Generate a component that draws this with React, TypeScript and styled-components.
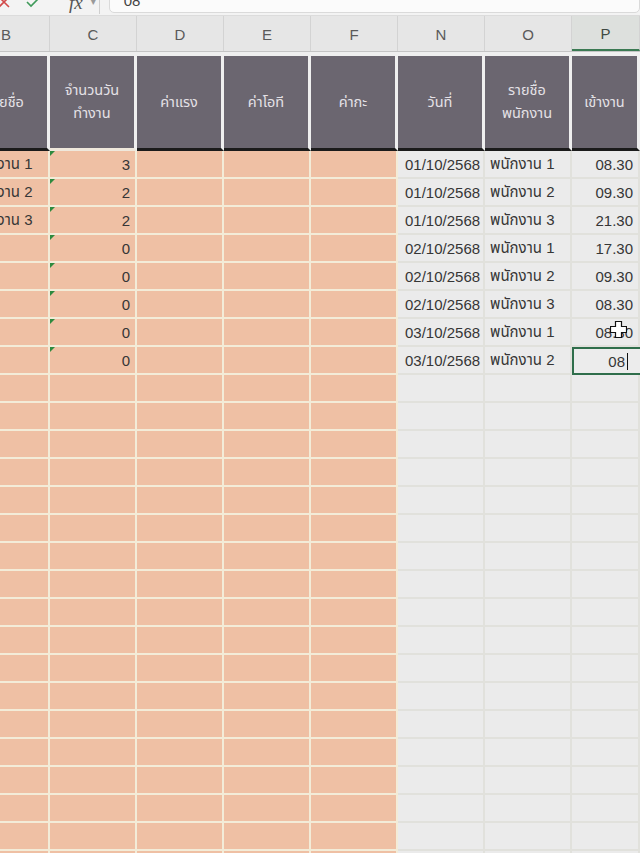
import React from 'react';
import styled, { createGlobalStyle } from 'styled-components';

type Tone = 'pink' | 'gray';
type Align = 'left' | 'right';

const COL_TEMPLATE = '87px 87px 87px 87px 87px 87px 87px 68px';

const LETTERS = ['B', 'C', 'D', 'E', 'F', 'N', 'O', 'P'];

const HEADERS: { label: string[]; noBase?: boolean }[] = [
  { label: ['รายชื่อ'] },
  { label: ['จำนวนวัน', 'ทำงาน'], noBase: true },
  { label: ['ค่าแรง'] },
  { label: ['ค่าโอที'] },
  { label: ['ค่ากะ'] },
  { label: ['วันที่'] },
  { label: ['รายชื่อ', 'พนักงาน'] },
  { label: ['เข้างาน'] },
];

const SUMMARY = [
  { name: 'พนักงาน 1', days: '3' },
  { name: 'พนักงาน 2', days: '2' },
  { name: 'พนักงาน 3', days: '2' },
  { name: '', days: '0' },
  { name: '', days: '0' },
  { name: '', days: '0' },
  { name: '', days: '0' },
  { name: '', days: '0' },
];

const LOG = [
  { date: '01/10/2568', name: 'พนักงาน 1', time: '08.30' },
  { date: '01/10/2568', name: 'พนักงาน 2', time: '09.30' },
  { date: '01/10/2568', name: 'พนักงาน 3', time: '21.30' },
  { date: '02/10/2568', name: 'พนักงาน 1', time: '17.30' },
  { date: '02/10/2568', name: 'พนักงาน 2', time: '09.30' },
  { date: '02/10/2568', name: 'พนักงาน 3', time: '08.30' },
  { date: '03/10/2568', name: 'พนักงาน 1', time: '08.30' },
];

const ROW_COUNT = 26;

const GlobalStyle = createGlobalStyle`
  html, body {
    margin: 0;
    padding: 0;
    background: #ebebeb;
  }
  body {
    font-family: "Liberation Sans", "Noto Sans", "Noto Sans Thai", "DejaVu Sans", sans-serif;
  }
`;

const App = () => {
  const rows = Array.from({ length: ROW_COUNT }, (_, i) => i);

  return (
    <Page>
      <GlobalStyle />
      <FormulaBar>
        <BarIcon>
          <svg width="14" height="14" viewBox="0 0 14 14">
            <path d="M2 2 L12 12 M12 2 L2 12" stroke="#d24a4a" strokeWidth="1.6" fill="none" />
          </svg>
        </BarIcon>
        <BarIcon>
          <svg width="16" height="14" viewBox="0 0 16 14">
            <path d="M2 7 L6 11 L14 3" stroke="#3f9a5a" strokeWidth="1.6" fill="none" />
          </svg>
        </BarIcon>
        <FxLabel>fx</FxLabel>
        <Caret>▾</Caret>
        <BarDivider />
        <FormulaInput>08</FormulaInput>
      </FormulaBar>

      <LetterRow>
        {LETTERS.map(l => (
          <Letter key={l} $active={l === 'P'}>
            {l}
          </Letter>
        ))}
      </LetterRow>

      <Sheet>
        {HEADERS.map((h, i) => (
          <HeaderCell key={i} $noBase={h.noBase}>
            <span>
              {h.label.map((line, j) => (
                <div key={j}>{line}</div>
              ))}
            </span>
          </HeaderCell>
        ))}

        {rows.map(r => {
          const sum = SUMMARY[r];
          const log = LOG[r];
          const editing = r === 7;
          return (
            <React.Fragment key={r}>
              <Cell $tone="pink" $align="left">{sum?.name}</Cell>
              <Cell $tone="pink" $align="right">
                {sum && <Flag />}
                {sum?.days}
              </Cell>
              <Cell $tone="pink" $align="right" />
              <Cell $tone="pink" $align="right" />
              <Cell $tone="pink" $align="right" />
              <Cell $tone="gray" $align="left" $pad={7}>
                {editing ? '03/10/2568' : log?.date}
              </Cell>
              <Cell $tone="gray" $align="left">
                {editing ? 'พนักงาน 2' : log?.name}
              </Cell>
              {editing ? (
                <ActiveCell>
                  08
                  <TextCaret />
                </ActiveCell>
              ) : (
                <Cell $tone="gray" $align="right">
                  {log?.time}
                  {r === 6 && (
                    <MoveCursor width="17" height="17" viewBox="0 0 17 17">
                      <path
                        d="M5.5 0.5 H11.5 V5.5 H16.5 V11.5 H11.5 V16.5 H5.5 V11.5 H0.5 V5.5 H5.5 Z"
                        fill="#ffffff"
                        stroke="#111111"
                        strokeWidth="1.2"
                      />
                    </MoveCursor>
                  )}
                </Cell>
              )}
            </React.Fragment>
          );
        })}
      </Sheet>
    </Page>
  );
};

export default App;

const Page = styled.div`
  width: 640px;
  height: 853px;
  overflow: hidden;
  background: #ebebeb;
`;

const FormulaBar = styled.div`
  display: flex;
  align-items: flex-start;
  height: 16px;
  overflow: hidden;
  background: #f3f3f3;
  border-bottom: 1px solid #dcdcdc;
  box-sizing: border-box;
`;

const BarIcon = styled.div`
  display: flex;
  margin-top: -5px;
  margin-right: 14px;

  &:first-child {
    margin-left: -3px;
  }
`;

const FxLabel = styled.div`
  margin-top: -8px;
  margin-left: 14px;
  font-family: "Liberation Serif", serif;
  font-style: italic;
  font-size: 19px;
  color: #555;
`;

const Caret = styled.div`
  margin-top: -4px;
  margin-left: 8px;
  font-size: 10px;
  color: #9a9a9a;
`;

const BarDivider = styled.div`
  width: 1px;
  height: 14px;
  margin-left: 3px;
  background: #cfcfcf;
`;

const FormulaInput = styled.div`
  flex: 1;
  height: 26px;
  margin-top: -13px;
  margin-left: 9px;
  padding: 0 14px;
  display: flex;
  align-items: center;
  background: #fbfbfb;
  border: 1px solid #dadada;
  border-radius: 5px;
  font-size: 15px;
  color: #444;
  box-sizing: border-box;
`;

const LetterRow = styled.div`
  display: grid;
  grid-template-columns: ${COL_TEMPLATE};
  margin-left: -37px;
  height: 36px;
  background: #e6e6e6;
  border-bottom: 1px solid #c4c4c4;
  box-sizing: border-box;
`;

const Letter = styled.div<{ $active?: boolean }>`
  display: flex;
  align-items: center;
  justify-content: center;
  padding-top: 2px;
  font-size: 15px;
  color: ${p => (p.$active ? '#3f4a43' : '#5a5a5a')};
  background: ${p => (p.$active ? '#dde0dd' : 'transparent')};
  border-right: 1px solid #d3d3d3;
  border-bottom: ${p => (p.$active ? '2px solid #3b7a53' : '0')};
  box-sizing: border-box;
`;

const Sheet = styled.div`
  display: grid;
  grid-template-columns: ${COL_TEMPLATE};
  margin-left: -37px;
`;

const HeaderCell = styled.div<{ $noBase?: boolean }>`
  height: 99px;
  display: flex;
  align-items: center;
  justify-content: center;
  text-align: center;
  background: #6b6670;
  border-top: 4px solid #efefef;
  border-right: 3px solid #efefef;
  border-bottom: 3px solid ${p => (p.$noBase ? '#efe8dc' : '#1b1b1b')};
  color: #e4e1e6;
  font-size: 14.5px;
  line-height: 23px;
  box-sizing: border-box;
`;

const TONES: Record<Tone, { bg: string; line: string }> = {
  pink: { bg: '#efc0a4', line: '#f3ecd8' },
  gray: { bg: '#ebebeb', line: '#e1e1dc' },
};

const Cell = styled.div<{ $tone: Tone; $align: Align; $pad?: number }>`
  position: relative;
  height: 28px;
  display: flex;
  align-items: center;
  justify-content: ${p => (p.$align === 'right' ? 'flex-end' : 'flex-start')};
  padding: 1px 5px 0 ${p => p.$pad ?? 5}px;
  background: ${p => TONES[p.$tone].bg};
  border-right: 2px solid ${p => TONES[p.$tone].line};
  border-bottom: 2px solid ${p => TONES[p.$tone].line};
  font-size: 15px;
  color: #363636;
  white-space: nowrap;
  box-sizing: border-box;
`;

const ActiveCell = styled.div`
  height: 28px;
  display: flex;
  align-items: center;
  justify-content: flex-end;
  padding: 1px 12px 0 5px;
  background: #ececec;
  border: 2px solid #2f6e4b;
  border-right: 0;
  font-size: 15px;
  color: #363636;
  box-sizing: border-box;
`;

const TextCaret = styled.span`
  width: 1px;
  height: 17px;
  margin-left: 2px;
  background: #111;
`;

const Flag = styled.span`
  position: absolute;
  top: 0;
  left: 0;
  width: 0;
  height: 0;
  border-top: 5px solid #2e8a3e;
  border-right: 5px solid transparent;
`;

const MoveCursor = styled.svg`
  position: absolute;
  top: 2px;
  left: 38px;
`;
